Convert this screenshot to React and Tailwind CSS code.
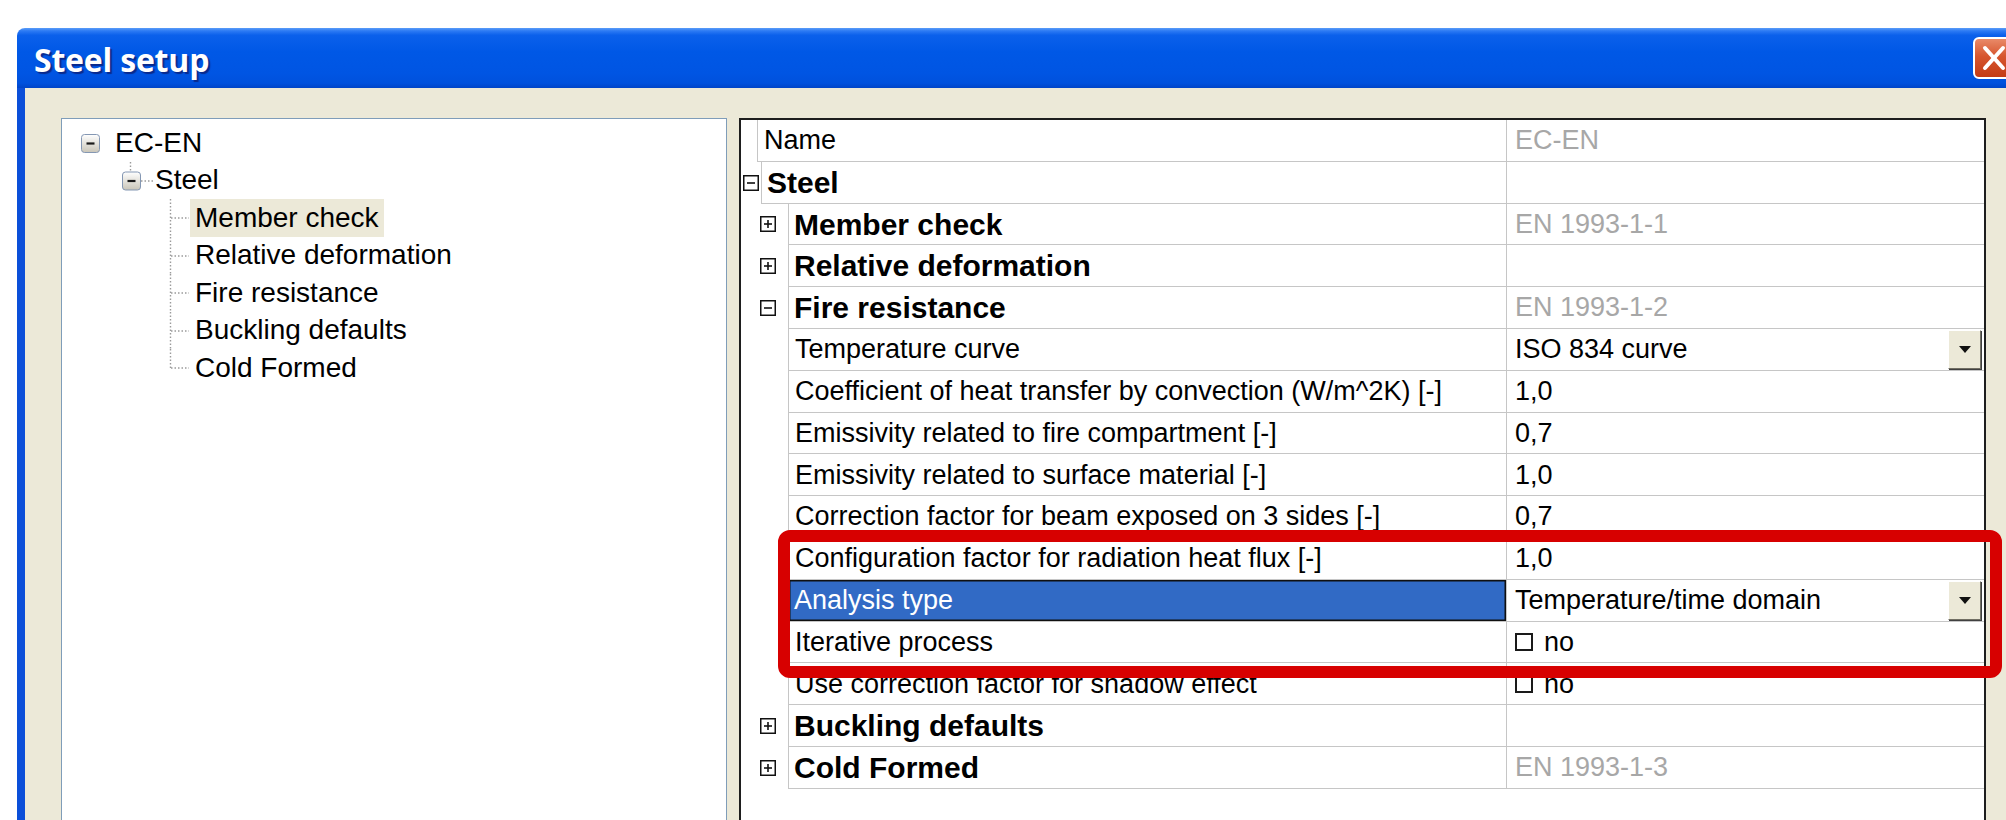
import React from 'react';

const GRID_ROWS = [
  { kind: 'name', label: 'Name', value: 'EC-EN', gray: true },
  { kind: 'cat0', label: 'Steel', open: true },
  { kind: 'cat1', label: 'Member check', value: 'EN 1993-1-1', gray: true },
  { kind: 'cat1', label: 'Relative deformation' },
  { kind: 'cat1', label: 'Fire resistance', value: 'EN 1993-1-2', gray: true, open: true },
  { kind: 'prop', label: 'Temperature curve', value: 'ISO 834 curve', dropdown: true },
  { kind: 'prop', label: 'Coefficient of heat transfer by convection (W/m^2K) [-]', value: '1,0' },
  { kind: 'prop', label: 'Emissivity related to fire compartment [-]', value: '0,7' },
  { kind: 'prop', label: 'Emissivity related to surface material [-]', value: '1,0' },
  { kind: 'prop', label: 'Correction factor for beam exposed on 3 sides [-]', value: '0,7' },
  { kind: 'prop', label: 'Configuration factor for radiation heat flux [-]', value: '1,0' },
  { kind: 'prop', label: 'Analysis type', value: 'Temperature/time domain', dropdown: true, selected: true },
  { kind: 'prop', label: 'Iterative process', value: 'no', checkbox: true },
  { kind: 'prop', label: 'Use correction factor for shadow effect', value: 'no', checkbox: true },
  { kind: 'cat1', label: 'Buckling defaults' },
  { kind: 'cat1', label: 'Cold Formed', value: 'EN 1993-1-3', gray: true },
];

const LEAVES = ['Member check', 'Relative deformation', 'Fire resistance', 'Buckling defaults', 'Cold Formed'];

// small boxed +/- used by the property grid
const GridToggle = ({ open }) => (
  <svg width="16" height="16" viewBox="0 0 16 16">
    <rect x="0.75" y="0.75" width="14.5" height="14.5" fill="white" stroke="#111" strokeWidth="1.5" />
    <line x1="4" y1="8" x2="12" y2="8" stroke="#111" strokeWidth="1.6" />
    {!open && <line x1="8" y1="4" x2="8" y2="12" stroke="#111" strokeWidth="1.6" />}
  </svg>
);

const TreeBox = ({ x, y }) => (
  <g>
    <rect x={x + 0.5} y={y + 0.5} width="18" height="18" rx="3" fill="url(#tbox)" stroke="#8497b3" />
    <line x1={x + 5.5} y1={y + 9.5} x2={x + 13.5} y2={y + 9.5} stroke="#1a1a1a" strokeWidth="2.2" />
  </g>
);

const dots = { stroke: '#9b9b9b', strokeWidth: 1.4, strokeDasharray: '1.5 2' };

const DropButton = () => (
  <div className="w-[33px] h-[39px] bg-[#ece9d8] border border-t-white border-l-white border-b-[#716f64] border-r-[#716f64] shadow-[1px_1px_0_#404040] flex items-center justify-center">
    <svg width="12" height="7" viewBox="0 0 12 7">
      <polygon points="0,0 12,0 6,7" fill="#111" />
    </svg>
  </div>
);

function GridRow({ row }) {
  const bold = row.kind === 'cat0' || row.kind === 'cat1';
  let indent;
  if (row.kind === 'name') indent = <div className="w-[16px] shrink-0" />;
  else if (row.kind === 'cat0')
    indent = (
      <div className="w-[20px] shrink-0 flex items-center pl-[2px]">
        <GridToggle open={row.open} />
      </div>
    );
  else if (row.kind === 'cat1')
    indent = (
      <div className="w-[47px] shrink-0 flex items-center pl-[19px]">
        <GridToggle open={row.open} />
      </div>
    );
  else indent = <div className="w-[47px] shrink-0" />;

  return (
    <div className="flex h-[41.8px]">
      {indent}
      <div className="flex flex-1 min-w-0 border-l border-b border-[#c6c6c6]">
        <div
          className={
            row.selected
              ? 'flex-1 min-w-0 flex items-center pl-[5px] whitespace-nowrap overflow-hidden bg-[#316ac5] text-white text-[27px] shadow-[inset_0_0_0_1.5px_#101010]'
              : bold
              ? 'flex-1 min-w-0 flex items-center pl-[5px] whitespace-nowrap overflow-hidden text-black text-[30px] font-bold'
              : 'flex-1 min-w-0 flex items-center pl-[6px] whitespace-nowrap overflow-hidden text-black text-[27px]'
          }
        >
          {row.label}
        </div>
        <div className="w-[478px] shrink-0 border-l border-[#c6c6c6] flex items-center pl-[8px] pr-[3px] text-[27px] whitespace-nowrap">
          {row.checkbox && (
            <span className="inline-block shrink-0 w-[18px] h-[18px] border-2 border-[#1a1a1a] mr-[11px]" />
          )}
          <span className={row.gray ? 'text-[#a7a7a7]' : 'text-black'}>{row.value}</span>
          {row.dropdown && (
            <div className="ml-auto">
              <DropButton />
            </div>
          )}
        </div>
      </div>
    </div>
  );
}

function Tree() {
  return (
    <div className="w-[666px] h-[720px] shrink-0 border border-[#7f9db9] bg-white pt-[5px] text-[28px] text-black">
      <div className="flex items-center h-[37.5px]">
        <svg width="53" height="37.5" className="shrink-0">
          <defs>
            <linearGradient id="tbox" x1="0" y1="0" x2="0" y2="1">
              <stop offset="0" stopColor="#ffffff" />
              <stop offset="1" stopColor="#c9c5b8" />
            </linearGradient>
          </defs>
          <TreeBox x={19} y={10} />
        </svg>
        <span>EC-EN</span>
      </div>
      <div className="flex items-center h-[37.5px]">
        <svg width="93" height="37.5" className="shrink-0">
          <line x1="68.5" y1="0" x2="68.5" y2="10" {...dots} />
          <TreeBox x={60} y={9.5} />
          <line x1="79" y1="19" x2="92" y2="19" {...dots} />
        </svg>
        <span>Steel</span>
      </div>
      {LEAVES.map((name, i) => (
        <div key={name} className="flex items-center h-[37.5px]">
          <svg width="128" height="37.5" className="shrink-0">
            <line x1="108.5" y1="0" x2="108.5" y2={i === LEAVES.length - 1 ? 19 : 37.5} {...dots} />
            <line x1="109" y1="19" x2="127" y2="19" {...dots} />
          </svg>
          <span
            className={
              i === 0
                ? 'h-[38px] flex items-center px-[5px] bg-[#ece9d8]'
                : 'h-[38px] flex items-center px-[5px]'
            }
          >
            {name}
          </span>
        </div>
      ))}
    </div>
  );
}

export default function App() {
  return (
    <div className="relative w-[2006px] h-[820px] overflow-hidden bg-white font-['Liberation_Sans',Arial,sans-serif]">
      <div className="ml-[17px] mt-[28px] w-[2010px]">
        <div className="h-[60px] rounded-tl-[8px] flex items-center pl-[17px] bg-[linear-gradient(180deg,#5a9cf8_0%,#2c7af4_5%,#0b60eb_12%,#0058e6_40%,#0055e3_75%,#0051dd_92%,#0045c8_100%)]">
          <span className="pt-[3px] text-white font-bold text-[32px] tracking-[-0.2px] font-['Open_Sans',sans-serif] [text-shadow:2px_2px_1px_#0a2a8c]">
            Steel setup
          </span>
          <div className="ml-auto mr-[12px] w-[42px] h-[42px] rounded-[6px] border-2 border-white bg-[linear-gradient(180deg,#e98a68_0%,#d6562f_45%,#c43b15_100%)] flex items-center justify-center">
            <svg width="24" height="26" viewBox="0 0 24 26">
              <line x1="3" y1="3" x2="21" y2="23" stroke="white" strokeWidth="4" strokeLinecap="round" />
              <line x1="21" y1="3" x2="3" y2="23" stroke="white" strokeWidth="4" strokeLinecap="round" />
            </svg>
          </div>
        </div>
        <div className="flex h-[732px] bg-[#ece9d8] border-l-[8px] border-l-[#0b4fd9] pl-[36px] pt-[30px]">
          <Tree />
          <div className="ml-[12px] w-[1247px] h-[720px] shrink-0 border-2 border-[#1e1e1e] bg-white">
            {GRID_ROWS.map((row) => (
              <GridRow key={row.label} row={row} />
            ))}
          </div>
        </div>
      </div>
      <div className="absolute left-[778px] top-[530px] w-[1224px] h-[148px] border-[12px] border-[#d70000] rounded-[12px]" />
    </div>
  );
}
